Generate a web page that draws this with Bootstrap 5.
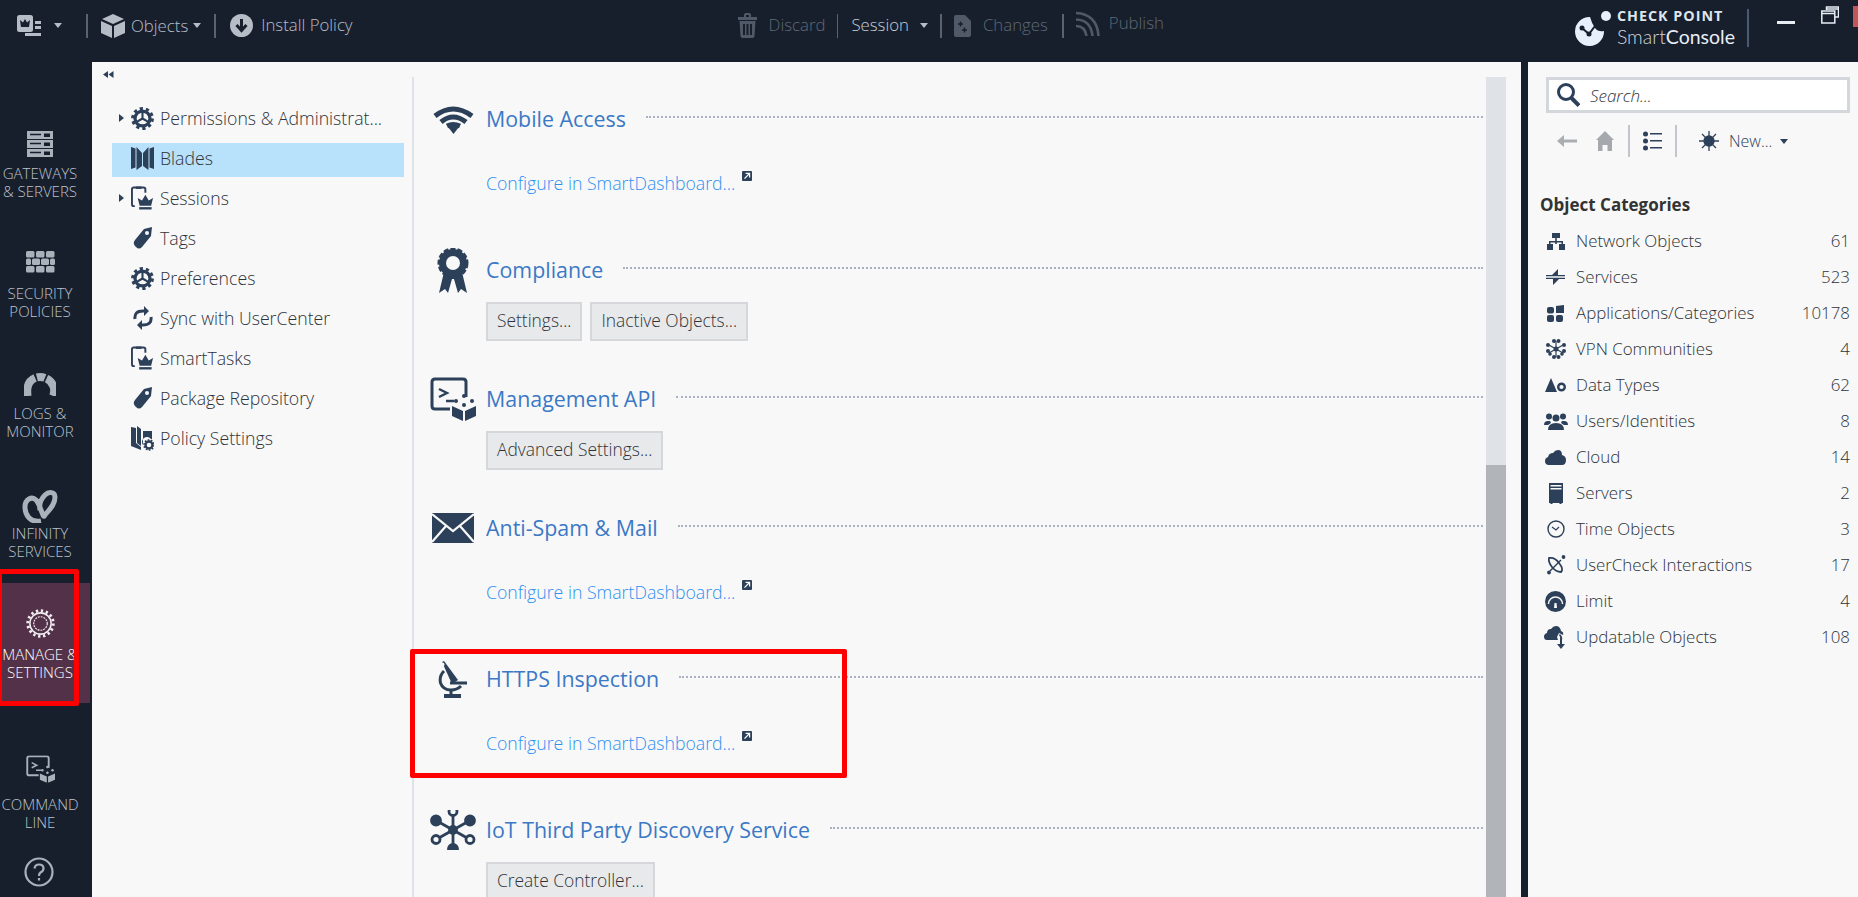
<!DOCTYPE html>
<html lang="en">
<head>
<meta charset="UTF-8">
<title>SmartConsole</title>
<link href="https://cdn.jsdelivr.net/npm/bootstrap@5.3.3/dist/css/bootstrap.min.css" rel="stylesheet">
<style>
  html, body { height: 100%; overflow: hidden; }
  body { font-family: "Open Sans", "Noto Sans", sans-serif; font-size: 17.700px; font-weight: 300; background: #f8f8f8; color: #2f3338; }
  .sc-dark { background: #171f2d; }

  /* top bar */
  .top-bar { height: 62px; color: #b7bdc7; padding: 0 0 11px 17px; font-size: 16.800px; }
  .top-sep { width: 2px; height: 24px; background: #596270; }
  .top-caret { width: 0; height: 0; border-left: 4px solid transparent; border-right: 4px solid transparent; border-top: 5px solid #b7bdc7; }
  .top-dim { color: #5f6875; }
  .top-txt { line-height: 1; }
  .top-right { margin-top: 5px; }
  .brand-top { font-weight: 700; font-size: 14.300px; letter-spacing: 1px; color: #dfe5ee; line-height: 1; }
  .brand-low { font-family: "Lato", sans-serif; font-weight: 300; font-size: 19.500px; color: #cfd6df; line-height: 1; }
  .brand-low b { font-weight: 400; color: #e8edf4; }

  /* left rail */
  .rail { width: 92px; flex: none; padding-top: 41px; color: #bcc3cd; }
  .rail-item { width: 90px; height: 120px; padding: 28px 10px 0 0; font-size: 15px; line-height: 18px; text-align: center; }
  .rail-item svg { display: block; margin: 0 auto; }
  .rail-label { white-space: nowrap; display: block; margin: 0 -10px; }
  .rail-on { background: #533249; color: #fff; }

  /* tree */
  .tree-pane { width: 320px; flex: none; padding-top: 8px; }
  .tree-collapse { display: block; margin-left: 11px; }
  .tree-row { height: 34px; margin: 0 8px 6px 20px; padding-bottom: 4px; color: #2f3338; text-decoration: none; white-space: nowrap; }
  .tree-on { background: #b8e1fc; }
  .tree-arrow { width: 19px; flex: none; padding-left: 7px; }
  .tree-arrow i { display: block; width: 0; height: 0; border-top: 4px solid transparent; border-bottom: 4px solid transparent; border-left: 5px solid #2d405a; }
  .tree-ico { width: 23px; flex: none; margin-right: 6px; display: flex; justify-content: center; }

  /* blades */
  .main-pane { flex: 1 1 0; min-width: 0; padding-top: 15px; overflow: hidden; }
  .main-rule { border-left: 2px solid #dfe2e6; height: 100%; padding: 22px 3px 0 0; overflow: hidden; }
  .blade { height: 151px; }
  .blade-short { height: 129px; }
  .blade-last { height: 88px; overflow: hidden; }
  .blade-head { height: 40px; }
  .blade-ico { width: 72px; flex: none; padding-left: 6px; display: flex; justify-content: center; }
  .blade-title { font-size: 21.400px; font-weight: 400; color: #3b78c5; line-height: 1; white-space: nowrap; margin-top: -1px; }
  .blade-dots { flex: 1 1 0; margin: -4px 0 0 20px; border-top: 2px dotted #abb1c0; }
  .blade-body { margin: 12px 0 0 72px; }
  .blade-link { display: block; padding-top: 20px; color: #2f90f0; line-height: 24px; text-decoration: none; }
  .blade-link svg { vertical-align: 9px; margin-left: 7px; }
  .btn-blade { height: 39px; padding: 0 9px 1px; background: #e8e9eb; border: 2px solid #d5d7db; border-radius: 0; color: #2f3338; font-size: 17.400px; font-weight: 300; line-height: 1; }

  /* scrollbar */
  .sb-track { width: 20px; flex: none; margin-top: 15px; background: #dfe2e6; }
  .sb-thumb { margin-top: 388px; background: #b1b5b9; }
  .sb-gap { width: 15px; flex: none; }

  /* right pane */
  .side-pane { width: 337px; flex: none; border-left: 7px solid #171f2d; padding-top: 15px; background: #f8f8f8; }
  .side-search { margin: 0 8px 0 18px; height: 36px; background: #fff; border: 3px solid #d3d7dc; padding-left: 8px; }
  .side-search .form-control { border: 0; box-shadow: none; padding: 2px 0 0 10px; font-style: italic; background: transparent; font-size: 17px; font-weight: 300; color: #2f3338; }
  .side-search .form-control::placeholder { color: #2f3338; opacity: 1; }
  .side-tools { height: 56px; padding-left: 29px; }
  .side-sep { width: 2px; height: 32px; background: #c2c6cb; }
  .side-new { color: #2d405a; font-size: 16px; }
  .side-caret { width: 0; height: 0; border-left: 4px solid transparent; border-right: 4px solid transparent; border-top: 5px solid #2d405a; }
  .cat-title { font-weight: 700; font-size: 17px; color: #333; margin: 24px 0 0 12px; line-height: 24px; }
  .cat-list { margin-top: 6px; }
  .cat-row { height: 36px; padding: 0 8px 0 13px; border: 0; background: transparent; color: #2f3338; line-height: 1; font-size: 16.900px; }
  .cat-ico { width: 35px; flex: none; display: flex; justify-content: center; padding-right: 6px; }

  /* annotation boxes drawn over the shot */
  .mark-box { position: absolute; border: 5px solid #f00; border-radius: 2px; pointer-events: none; }
  .mark-rail { left: -3px; top: 569px; width: 82px; height: 137px; }
  .mark-blade { left: 410px; top: 649px; width: 437px; height: 129px; }
</style>
</head>
<body>

<svg width="0" height="0" class="position-absolute">
  <defs>
    <symbol id="i-gear" viewBox="0 0 24 24">
      <circle cx="12" cy="12" r="10.400" fill="none" stroke="#2d405a" stroke-width="3" stroke-dasharray="3.400 3.130"/>
      <circle cx="12" cy="12" r="7.800" fill="none" stroke="#2d405a" stroke-width="3.400"/>
      <path d="M12 12V5M12 12 6 15.600M12 12l6 3.600" stroke="#2d405a" stroke-width="2.200" fill="none"/>
    </symbol>
    <symbol id="i-crown" viewBox="0 0 24 25">
      <path d="M15 7V3.500Q15 1.500 13 1.500H3Q1 1.500 1 3.500V19Q1 21 3 21H4" fill="none" stroke="#2d405a" stroke-width="2"/>
      <path d="M5 .5h6v2.500H5z" fill="#2d405a"/>
      <path d="M7 12.500l4.500 2.500L15 9l3.500 6L23 12.500 21 20.500H9z" fill="#2d405a"/>
      <path d="M8.500 22h13v2.500h-13z" fill="#2d405a"/>
    </symbol>
    <symbol id="i-tag" viewBox="0 0 20 24">
      <path d="M19 1 11 3 2 14Q-.5 17 2 20l1 1q3 3 6 0l9-11zM14 5a2 2 0 1 1 0 4 2 2 0 0 1 0-4z" fill="#2d405a" fill-rule="evenodd"/>
    </symbol>
    <symbol id="i-term" viewBox="0 0 46 44">
      <path d="M20 32H5Q2 32 2 29V5Q2 2 5 2H33Q36 2 36 5V20" fill="none" stroke="currentColor" stroke-width="3"/>
      <path d="M9 12l8 4-8 4M16 24h8" fill="none" stroke="currentColor" stroke-width="2.400"/>
      <path d="M22 29l11 5V44l-11-5zM46 29l-11 5V44l11-5z" fill="currentColor"/>
      <circle cx="34" cy="19" r="2" fill="currentColor"/><circle cx="26" cy="24" r="2" fill="currentColor"/><circle cx="42" cy="24" r="2" fill="currentColor"/><circle cx="34" cy="28" r="2" fill="currentColor"/>
    </symbol>
    <symbol id="i-ext" viewBox="0 0 10 10">
      <rect width="10" height="10" rx="1" fill="#2d405a"/>
      <path d="M2.500 7.600 7 3M3.600 2.400H7.600V6.400" fill="none" stroke="#fff" stroke-width="1.200"/>
    </symbol>
  </defs>
</svg>

<!-- TOP BAR -->
<div class="top-bar sc-dark d-flex align-items-center">
  <svg width="25" height="22" viewBox="0 0 25 22" fill="#b7bdc7"><rect width="16" height="17" rx="2.500"/><path d="M3 5l3 2.500L8 4l2 3.500L13 5l-1 7H4z" fill="#171f2d"/><path d="M18 6h6v3h-6zM18 11h6v3h-6zM8 18h16v3H8z"/></svg>
  <span class="top-caret" style="margin-left:12px"></span>
  <span class="top-sep" style="margin-left:24px"></span>
  <svg width="24" height="24" viewBox="0 0 24 24" style="margin-left:13px" fill="#b7bdc7"><path d="M12 0 23 5 12 10 1 5zM0 7l11 5v12L0 19zM24 7l-11 5v12l11-5z"/></svg>
  <span class="top-txt" style="margin:2px 0 0 6px">Objects</span>
  <span class="top-caret" style="margin-left:5px"></span>
  <span class="top-sep" style="margin-left:13px"></span>
  <svg width="23" height="23" viewBox="0 0 23 23" style="margin-left:14px"><circle cx="11.500" cy="11.500" r="11.500" fill="#b7bdc7"/><path d="M11.500 5v11M6.500 11l5 5.500 5-5.500" fill="none" stroke="#171f2d" stroke-width="3"/></svg>
  <span class="top-txt" style="margin-left:8px">Install Policy</span>

  <div class="d-flex align-items-center top-dim" style="margin-left:385px">
    <svg width="19" height="25" viewBox="0 0 19 25" fill="#505967"><path d="M6 4V2q0-2 2-2h3q2 0 2 2v2h6v3H0V4zM8 2v2h3V2zM1.500 8h16l-1 15q0 2-2 2h-10q-2 0-2-2zM5 11v11h2V11zM8.500 11v11h2V11zM12 11v11h2V11z" fill-rule="evenodd"/></svg>
    <span class="top-txt" style="margin-left:12px">Discard</span>
    <span class="top-sep" style="margin-left:12px;width:1px"></span>
    <span class="top-txt" style="margin-left:13px;color:#c7ced8">Session</span>
    <span class="top-caret" style="margin-left:11px"></span>
    <span class="top-sep" style="margin-left:12px"></span>
    <svg width="17" height="22" viewBox="0 0 17 22" style="margin-left:12px" fill="#505967"><path d="M2 0h9l6 6v14q0 2-2 2H2q-2 0-2-2V2Q0 0 2 0z"/><path d="M4 9h5M6.500 6.500v5M8 15h5M10.500 12.500v5" stroke="#171f2d" stroke-width="1.400" fill="none"/></svg>
    <span class="top-txt" style="margin-left:12px">Changes</span>
    <span class="top-sep" style="margin-left:14px"></span>
    <svg width="25" height="25" viewBox="0 0 25 25" class="mb-1" style="margin-left:11px" fill="none" stroke="#505967" stroke-width="2.600"><path d="M1 2Q22 3 23.500 25M1 8.500Q16 9 17.500 25M1 15Q10 15 11.500 25"/></svg>
    <span class="top-txt mb-1" style="margin-left:9px">Publish</span>
  </div>

  <div class="ms-auto d-flex align-items-center top-right">
    <svg width="38" height="35" viewBox="0 0 38 35"><path d="M16 6a14.500 14.500 0 1 0 14 14q-6 1-9-3t-5-11z" fill="#e6effa"/><circle cx="32" cy="5" r="5" fill="#e6effa"/><path d="M8 17l7 6 6-8" fill="none" stroke="#171f2d" stroke-width="2"/><circle cx="8" cy="17" r="2.500" fill="#171f2d"/><circle cx="15" cy="23" r="2.500" fill="#171f2d"/></svg>
    <div style="margin-left:5px">
      <div class="brand-top">CHECK POINT</div>
      <div class="brand-low mt-1">Smart<b>Console</b></div>
    </div>
    <span class="top-sep" style="height:38px;margin-left:12px;background:#4a5a70"></span>
    <span style="width:18px;height:3px;background:#e8edf4;margin:0 0 12px 28px"></span>
    <svg width="18" height="18" viewBox="0 0 18 18" fill="none" stroke="#e8edf4" stroke-width="1.500" style="margin:0 14px 26px 26px"><path d="M5.500 4V1h12v10h-3.500"/><rect x=".8" y="5" width="13" height="12"/><path d="M1 7.500h13M6 3h12"/></svg>
    <span style="width:5px;height:21px;background:#c0565a;margin-bottom:23px"></span>
  </div>
</div>

<div class="d-flex" style="height:835px">

  <!-- LEFT RAIL -->
  <nav class="rail sc-dark">
    <div class="rail-item">
      <svg width="26" height="26" viewBox="0 0 26 26" fill="#a9b1bb"><path d="M0 0h26v8H0zM0 9h26v8H0zM0 18h26v8H0z"/><path d="M3 3.500h11M3 12.500h11M3 21.500h11" stroke="#171f2d" stroke-width="1.400"/><path d="M17 2.500h6v3.500h-6zM17 11.500h6v3.500h-6zM17 20.500h6v3.500h-6z" fill="#171f2d"/></svg>
      <span class="rail-label" style="margin-top:7px">GATEWAYS</span><span class="rail-label">&amp; SERVERS</span>
    </div>
    <div class="rail-item">
      <svg width="29" height="22" viewBox="0 0 29 22" fill="#a9b1bb"><rect width="8.500" height="6.500" rx="1.500"/><rect x="10" width="8.500" height="6.500" rx="1.500"/><rect x="20" width="8.500" height="6.500" rx="1.500"/><rect y="7.500" width="5" height="6.500" rx="1.500"/><rect x="6" y="7.500" width="8" height="6.500" rx="1.500"/><rect x="15" y="7.500" width="8" height="6.500" rx="1.500"/><rect x="24" y="7.500" width="5" height="6.500" rx="1.500"/><rect y="15" width="8.500" height="6.500" rx="1.500"/><rect x="10" y="15" width="8.500" height="6.500" rx="1.500"/><rect x="20" y="15" width="8.500" height="6.500" rx="1.500"/></svg>
      <span class="rail-label" style="margin-top:11px">SECURITY</span><span class="rail-label">POLICIES</span>
    </div>
    <div class="rail-item" style="padding-top:29px">
      <svg width="32" height="24" viewBox="0 2 32 24" fill="none" stroke="#a9b1bb" stroke-width="8"><path d="M3.500 26Q3 20 3.500 18A13 13 0 0 1 11.100 7.900"/><path d="M12.900 7.400A13 13 0 0 1 20.900 7.900"/><path d="M22.500 8.700A13 13 0 0 1 29 26"/></svg>
      <span class="rail-label" style="margin-top:8px">LOGS &amp;</span><span class="rail-label">MONITOR</span>
    </div>
    <div class="rail-item" style="padding-top:27px">
      <svg width="36" height="33" viewBox="0 0 36 33" fill="none" stroke="#a9b1bb" stroke-width="5"><path d="M19 31C8 33 3 25 3 17 3 9 10 6 14 10 19 15 21 31 23 25 27 20 33 15 33 7 33 2 27 1 23 5 18 10 17 15 18 20"/></svg>
      <span class="rail-label" style="margin-top:1px">INFINITY</span><span class="rail-label">SERVICES</span>
    </div>
    <div class="rail-item rail-on" style="padding-top:26px">
      <svg width="29" height="29" viewBox="0 0 30 30" fill="none" stroke="#f1edf1"><circle cx="15" cy="15" r="13.200" stroke-width="3" stroke-dasharray="2.400 2.780"/><circle cx="15" cy="15" r="11" stroke-width="1.600"/><circle cx="15" cy="15" r="7" stroke-width="1.200" stroke-dasharray="2 1"/></svg>
      <span class="rail-label" style="margin-top:7px">MANAGE &amp;</span><span class="rail-label">SETTINGS</span>
    </div>
    <div class="rail-item" style="margin-top:30px;padding-top:21px">
      <svg width="29" height="30" viewBox="0 0 46 44" style="color:#a9b1bb"><use href="#i-term"/></svg>
      <span class="rail-label" style="margin-top:11px">COMMAND</span><span class="rail-label">LINE</span>
    </div>
    <svg width="30" height="30" viewBox="0 0 30 30" class="d-block" style="margin:4px 0 0 24px" fill="none" stroke="#a9b1bb" stroke-width="2.200"><circle cx="15" cy="15" r="13.500"/><path d="M10.500 11.500Q11 7.500 15 7.500 19.500 7.500 19.500 11.500 19.500 14 16.500 15.500 15 16.500 15 19"/><path d="M15 21v2.500"/></svg>
  </nav>

  <!-- TREE -->
  <div class="tree-pane">
    <svg class="tree-collapse" width="11" height="10" viewBox="0 0 11 10" fill="#2d405a"><path d="M5 1v7L0 4.500zM10.500 1v7l-5-3.500z"/></svg>
    <div style="height:23px"></div>
    <div class="nav flex-column">
      <a class="tree-row d-flex align-items-center"><span class="tree-arrow"><i></i></span><span class="tree-ico"><svg width="23" height="23"><use href="#i-gear"/></svg></span>Permissions &amp; Administrat...</a>
      <a class="tree-row tree-on d-flex align-items-center"><span class="tree-arrow"></span><span class="tree-ico"><svg width="23" height="24" viewBox="0 0 23 24" fill="#2d405a"><path d="M0 1 4.500 2.500V21.500L0 23zM5.500 1 11 7V20L5.500 24zM17.500 1 12 7V20L17.500 24zM23 1 18.500 2.500V21.500L23 23z"/></svg></span>Blades</a>
      <a class="tree-row d-flex align-items-center"><span class="tree-arrow"><i></i></span><span class="tree-ico"><svg width="23" height="24"><use href="#i-crown"/></svg></span>Sessions</a>
      <a class="tree-row d-flex align-items-center"><span class="tree-arrow"></span><span class="tree-ico"><svg width="20" height="24"><use href="#i-tag"/></svg></span>Tags</a>
      <a class="tree-row d-flex align-items-center"><span class="tree-arrow"></span><span class="tree-ico"><svg width="23" height="23"><use href="#i-gear"/></svg></span>Preferences</a>
      <a class="tree-row d-flex align-items-center"><span class="tree-arrow"></span><span class="tree-ico"><svg width="20" height="24" viewBox="0 0 20 24" fill="none" stroke="#2d405a" stroke-width="3"><path d="M2 13Q1 5 10 5h2M18 11Q19 19 10 19H8"/><path d="M11 0l5 5-5 5zM9 14l-5 5 5 5z" fill="#2d405a" stroke="none"/></svg></span>Sync with UserCenter</a>
      <a class="tree-row d-flex align-items-center"><span class="tree-arrow"></span><span class="tree-ico"><svg width="23" height="24"><use href="#i-crown"/></svg></span>SmartTasks</a>
      <a class="tree-row d-flex align-items-center"><span class="tree-arrow"></span><span class="tree-ico"><svg width="20" height="24"><use href="#i-tag"/></svg></span>Package Repository</a>
      <a class="tree-row d-flex align-items-center"><span class="tree-arrow"></span><span class="tree-ico"><svg width="23" height="25" viewBox="0 0 23 25" fill="#2d405a"><path d="M0 1l5 1v15l5 4v3L0 20zM6 0l4 3v17l-4-3zM12 5h9v8h-1a5 5 0 0 0-8 6z"/><circle cx="18" cy="19" r="3.500" fill="none" stroke="#2d405a" stroke-width="2.400"/><circle cx="18" cy="19" r="5" fill="none" stroke="#2d405a" stroke-width="1.600" stroke-dasharray="1.600 1.500"/></svg></span>Policy Settings</a>
    </div>
  </div>

  <!-- BLADES -->
  <div class="main-pane">
    <div class="main-rule">
      <section class="blade">
        <div class="blade-head d-flex align-items-center">
          <span class="blade-ico"><svg width="41" height="29" viewBox="0 0 41 29" fill="none" stroke="#2d405a" stroke-width="5"><path d="M2 11Q20-3 39 11M8 17Q20 7 33 17"/><path d="M14 21Q20 18 27 21"/><path d="M15 22l5.500 7 5.500-7z" fill="#2d405a" stroke="none"/></svg></span>
          <span class="blade-title">Mobile Access</span><span class="blade-dots"></span>
        </div>
        <div class="blade-body"><a class="blade-link">Configure in SmartDashboard...<svg width="10" height="10"><use href="#i-ext"/></svg></a></div>
      </section>
      <section class="blade blade-short">
        <div class="blade-head d-flex align-items-center">
          <span class="blade-ico"><svg width="34" height="45" viewBox="0 0 34 45" fill="#2d405a"><path d="M8 24l-5 21 6-4 3 4 4-14h2l4 14 3-4 6 4-5-21z"/><circle cx="17" cy="15" r="14" stroke="#2d405a" stroke-width="3" stroke-dasharray="5 2"/><circle cx="17" cy="15" r="7" fill="#f8f8f8"/></svg></span>
          <span class="blade-title">Compliance</span><span class="blade-dots"></span>
        </div>
        <div class="blade-body d-flex gap-2"><button class="btn btn-blade">Settings...</button><button class="btn btn-blade">Inactive Objects...</button></div>
      </section>
      <section class="blade blade-short">
        <div class="blade-head d-flex align-items-center">
          <span class="blade-ico" style="color:#2d405a"><svg width="46" height="44"><use href="#i-term"/></svg></span>
          <span class="blade-title">Management API</span><span class="blade-dots"></span>
        </div>
        <div class="blade-body"><button class="btn btn-blade">Advanced Settings...</button></div>
      </section>
      <section class="blade">
        <div class="blade-head d-flex align-items-center">
          <span class="blade-ico"><svg width="42" height="30" viewBox="0 0 42 30" fill="#2d405a"><path d="M0 0h42v30H0z"/><path d="M0 1 21 18 42 1M0 29 14 13M42 29 28 13" fill="none" stroke="#f8f8f8" stroke-width="2.200"/></svg></span>
          <span class="blade-title">Anti-Spam &amp; Mail</span><span class="blade-dots"></span>
        </div>
        <div class="blade-body"><a class="blade-link">Configure in SmartDashboard...<svg width="10" height="10"><use href="#i-ext"/></svg></a></div>
      </section>
      <section class="blade">
        <div class="blade-head d-flex align-items-center">
          <span class="blade-ico"><svg width="30" height="37" viewBox="0 0 30 37" fill="none" stroke="#2d405a"><path d="M4 1l2-1 14 19-6 4z" fill="#2d405a" stroke="none"/><circle cx="4.500" cy="3.500" r="2" fill="#f8f8f8" stroke="none"/><path d="M6 10Q1 15 2.500 22 5 29 13 29 19 29 23 25" stroke-width="3"/><path d="M12 22h17" stroke-width="3"/><path d="M6 35h17" stroke-width="4"/><path d="M13 29v5" stroke-width="3"/></svg></span>
          <span class="blade-title">HTTPS Inspection</span><span class="blade-dots"></span>
        </div>
        <div class="blade-body"><a class="blade-link">Configure in SmartDashboard...<svg width="10" height="10"><use href="#i-ext"/></svg></a></div>
      </section>
      <section class="blade blade-last">
        <div class="blade-head d-flex align-items-center">
          <span class="blade-ico"><svg width="46" height="40" viewBox="0 4 46 40" fill="none" stroke="#2d405a" stroke-width="2.800"><path d="M23 9V43M7 15 39 33M39 15 7 33"/><circle cx="23" cy="5.500" r="4" fill="#f8f8f8"/><circle cx="6" cy="14.500" r="4.500" fill="#2d405a"/><circle cx="40" cy="14.500" r="4.500" fill="#2d405a"/><circle cx="6" cy="33.500" r="4" fill="#f8f8f8"/><circle cx="40" cy="33.500" r="4" fill="#f8f8f8"/><circle cx="23" cy="43" r="4.500" fill="#2d405a"/><circle cx="23" cy="24" r="3.500" fill="#2d405a"/></svg></span>
          <span class="blade-title">IoT Third Party Discovery Service</span><span class="blade-dots"></span>
        </div>
        <div class="blade-body"><button class="btn btn-blade">Create Controller...</button></div>
      </section>
    </div>
  </div>
  <div class="sb-track d-flex flex-column"><div class="sb-thumb flex-grow-1"></div></div>
  <div class="sb-gap"></div>

  <!-- OBJECT EXPLORER -->
  <aside class="side-pane">
    <div class="side-search d-flex align-items-center">
      <svg width="23" height="24" viewBox="0 0 23 24" class="flex-shrink-0" fill="none" stroke="#2d405a"><circle cx="9" cy="9" r="7.500" stroke-width="3"/><path d="M14.500 15 22 22.500" stroke-width="4"/></svg>
      <input class="form-control" type="text" placeholder="Search...">
    </div>
    <div class="side-tools d-flex align-items-center">
      <svg width="20" height="12" viewBox="0 0 20 12" fill="#aaadb2"><path d="M7 0v4.500h13v3H7V12L0 6z"/></svg>
      <svg width="18" height="20" viewBox="0 0 18 20" fill="#a5a8ad" style="margin-left:19px"><path d="M9 0 18 9h-2v11h-4.500v-6h-5v6H2V9H0z"/></svg>
      <span class="side-sep" style="margin-left:14px"></span>
      <svg width="19" height="20" viewBox="0 0 19 20" fill="#2d405a" style="margin-left:13px"><circle cx="2.500" cy="3" r="2.500"/><circle cx="2.500" cy="10" r="2.500"/><circle cx="2.500" cy="17" r="2.500"/><path d="M7 2h12v1.500H7zM7 9h12v1.500H7zM7 16h12v1.500H7z"/></svg>
      <span class="side-sep" style="margin-left:13px"></span>
      <svg width="20" height="20" viewBox="0 0 20 20" style="margin-left:22px" fill="none" stroke="#2d405a" stroke-width="1.300"><path d="M10 0V20M0 10H20M3 3 17 17M17 3 3 17"/><circle cx="10" cy="10" r="5" fill="#2d405a"/></svg>
      <span class="side-new" style="margin-left:10px">New...</span>
      <span class="side-caret" style="margin-left:8px"></span>
    </div>
    <div class="cat-title">Object Categories</div>
    <div class="list-group list-group-flush cat-list">
      <div class="list-group-item cat-row d-flex align-items-center"><span class="cat-ico"><svg width="18" height="17" viewBox="0 0 18 17" fill="#2d405a"><path d="M5 0h8v5H5zM8.200 5h1.600v3H16v3h-1.500V9.500H9.800V11H8.200V9.500H3.500V11H2V8h6.200z"/><path d="M0 11h6v6H0zM12 11h6v6h-6z"/></svg></span>Network Objects<span class="ms-auto">61</span></div>
      <div class="list-group-item cat-row d-flex align-items-center"><span class="cat-ico"><svg width="19" height="16" viewBox="0 0 19 16" fill="#2d405a"><path d="M12 0v6H19v1.300H0V6h6zM0 8.700h19V10h-6l-6 6v-6H0z"/></svg></span>Services<span class="ms-auto">523</span></div>
      <div class="list-group-item cat-row d-flex align-items-center"><span class="cat-ico"><svg width="17" height="17" viewBox="0 0 17 17" fill="#2d405a"><rect y="2" width="7" height="6.500" rx="2"/><path d="M9 1l8-1v8H9z"/><rect y="10" width="7" height="7" rx="2"/><rect x="9" y="10" width="7" height="7" rx="2"/></svg></span>Applications/Categories<span class="ms-auto">10178</span></div>
      <div class="list-group-item cat-row d-flex align-items-center"><span class="cat-ico"><svg width="20" height="20" viewBox="0 0 20 20" fill="#2d405a"><path d="M10 2V18M3 6l14 8M17 6 3 14" stroke="#2d405a" stroke-width="1.200"/><circle cx="10" cy="10" r="2.500"/><circle cx="8" cy="2" r="2"/><circle cx="12.500" cy="2" r="2"/><circle cx="8" cy="18" r="2"/><circle cx="12.500" cy="18" r="2"/><circle cx="2" cy="6" r="2"/><circle cx="18" cy="6" r="2"/><circle cx="2" cy="12" r="2"/><circle cx="18" cy="12" r="2"/><circle cx="4" cy="15" r="1.800"/><circle cx="16" cy="15" r="1.800"/></svg></span>VPN Communities<span class="ms-auto">4</span></div>
      <div class="list-group-item cat-row d-flex align-items-center"><span class="cat-ico"><svg width="21" height="14" viewBox="0 0 21 14" fill="#2d405a"><path d="M6 0l6 14H0z"/><circle cx="16.500" cy="9" r="3.300" fill="none" stroke="#2d405a" stroke-width="2.400"/></svg></span>Data Types<span class="ms-auto">62</span></div>
      <div class="list-group-item cat-row d-flex align-items-center"><span class="cat-ico"><svg width="24" height="17" viewBox="0 0 24 17" fill="#2d405a"><circle cx="5" cy="3.500" r="3"/><circle cx="12" cy="5" r="3.500"/><circle cx="19" cy="3.500" r="3"/><path d="M0 12q0-4 4-4h2l1 2-3 2H0zM24 12q0-4-4-4h-2l-1 2 3 2h4zM4 17q0-7 8-7t8 7z"/></svg></span>Users/Identities<span class="ms-auto">8</span></div>
      <div class="list-group-item cat-row d-flex align-items-center"><span class="cat-ico"><svg width="21" height="15" viewBox="0 0 21 15" fill="#2d405a"><path d="M4 15Q0 15 0 11 0 8 3 7 4 3 8 3 10 0 13 0 17 0 17 5 21 6 21 10 21 15 17 15z"/></svg></span>Cloud<span class="ms-auto">14</span></div>
      <div class="list-group-item cat-row d-flex align-items-center"><span class="cat-ico"><svg width="14" height="21" viewBox="0 0 14 21" fill="#2d405a"><path d="M0 0h14v20h-1.500v1h-2v-1h-7v1h-2v-1H0zM1.500 2v1.400h11V2zM1.500 5v1.400h11V5z" fill-rule="evenodd"/></svg></span>Servers<span class="ms-auto">2</span></div>
      <div class="list-group-item cat-row d-flex align-items-center"><span class="cat-ico"><svg width="18" height="18" viewBox="0 0 18 18" fill="none" stroke="#2d405a"><circle cx="9" cy="9" r="8" stroke-width="1.400"/><path d="M5 7l4 3 3-3" stroke-width="1.200"/></svg></span>Time Objects<span class="ms-auto">3</span></div>
      <div class="list-group-item cat-row d-flex align-items-center"><span class="cat-ico"><svg width="20" height="20" viewBox="0 0 20 20" fill="#2d405a"><path d="M3 3Q9 2 13 8 18 14 15 17 10 17 6 12 2 7 3 3z" fill="none" stroke="#2d405a" stroke-width="1.800"/><path d="M15 5 4 16" stroke="#2d405a" stroke-width="1.500"/><circle cx="17.500" cy="2" r="1.900"/><circle cx="3" cy="17.500" r="1.900"/></svg></span>UserCheck Interactions<span class="ms-auto">17</span></div>
      <div class="list-group-item cat-row d-flex align-items-center"><span class="cat-ico"><svg width="21" height="21" viewBox="0 0 21 21"><circle cx="10.500" cy="10.500" r="10.500" fill="#2d405a"/><path d="M3.500 13a7 7 0 0 1 14 0" fill="none" stroke="#f8f8f8" stroke-width="1.500"/><path d="M9.500 12h2l.5 5H9z" fill="#f8f8f8"/></svg></span>Limit<span class="ms-auto">4</span></div>
      <div class="list-group-item cat-row d-flex align-items-center"><span class="cat-ico"><svg width="24" height="23" viewBox="0 0 24 23" fill="#2d405a"><path d="M3 14Q0 14 0 10.500 0 8 3 7 3 3 7 3 9 0 12 0 16 0 17 5 20 6 19 9L15 7 13 11 14 14z"/><path d="M16 8Q19 11 18 14V18h3l-4 5-4-5h3V14Q17 11 15 9z"/></svg></span>Updatable Objects<span class="ms-auto">108</span></div>
    </div>
  </aside>
</div>

<!-- red annotation boxes -->
<div class="mark-box mark-rail"></div>
<div class="mark-box mark-blade"></div>

<script src="https://cdn.jsdelivr.net/npm/bootstrap@5.3.3/dist/js/bootstrap.bundle.min.js"></script>
</body>
</html>
